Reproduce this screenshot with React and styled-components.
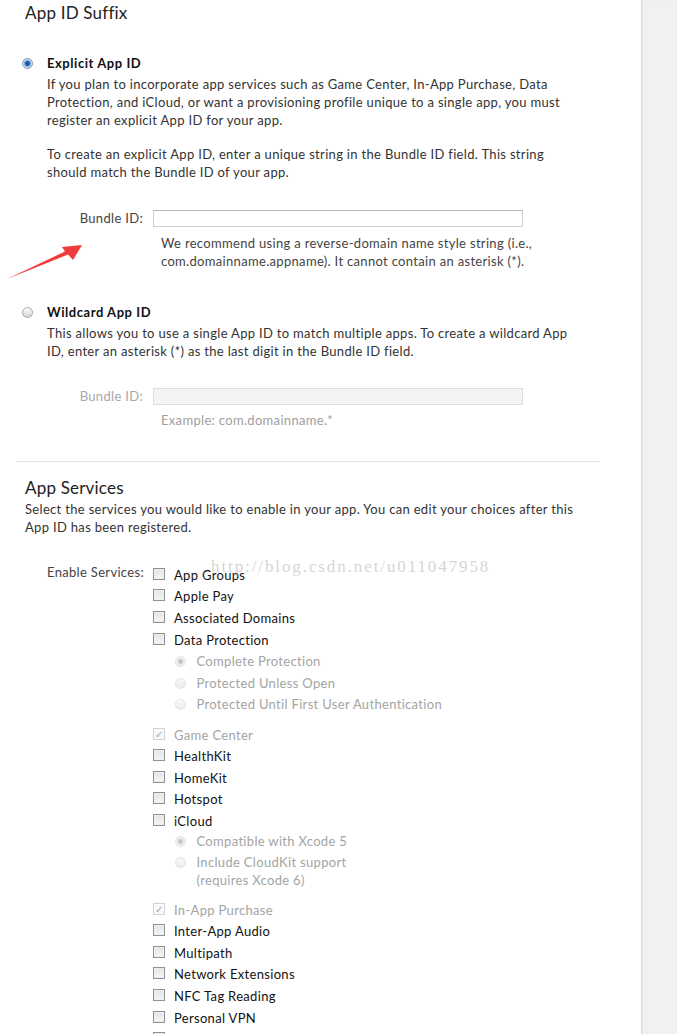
import React from "react"
import styled, { createGlobalStyle, css } from "styled-components"

const GlobalStyle = createGlobalStyle`
  html, body {
    margin: 0;
    padding: 0;
    background: #fff;
  }
  body {
    font-family: Lato, "Open Sans", sans-serif;
    font-size: 13px;
    letter-spacing: 0.32px;
    color: #333;
  }
`

const services = [
  { name: "App Groups" },
  { name: "Apple Pay" },
  { name: "Associated Domains" },
  {
    name: "Data Protection",
    options: [
      { label: "Complete Protection", checked: true },
      { label: "Protected Unless Open" },
      { label: "Protected Until First User Authentication" },
    ],
  },
  { name: "Game Center", disabled: true, checked: true },
  { name: "HealthKit" },
  { name: "HomeKit" },
  { name: "Hotspot" },
  {
    name: "iCloud",
    tight: true,
    options: [
      { label: "Compatible with Xcode 5", checked: true },
      { label: "Include CloudKit support", note: "(requires Xcode 6)" },
    ],
  },
  { name: "In-App Purchase", disabled: true, checked: true },
  { name: "Inter-App Audio" },
  { name: "Multipath" },
  { name: "Network Extensions" },
  { name: "NFC Tag Reading" },
  { name: "Personal VPN" },
  { name: "Push Notifications" },
]

const Arrow = () => (
  <ArrowSvg width="90" height="46" viewBox="0 0 90 46">
    <polygon
      points="7,41 65,13.5 62,9 82,7 73,22 68,16.5"
      fill="#f23b3b"
    />
  </ArrowSvg>
)

const App = () => {
  return (
    <Page>
      <GlobalStyle />
      <Main>
        <Title>App ID Suffix</Title>

        <Option $top={31}>
          <Radio $checked />
          <OptionBody>
            <OptionName>Explicit App ID</OptionName>
            <Text $top={3}>
              If you plan to incorporate app services such as Game Center, In-App Purchase, Data<br />
              Protection, and iCloud, or want a provisioning profile unique to a single app, you must<br />
              register an explicit App ID for your app.
            </Text>
            <Text $top={16}>
              To create an explicit App ID, enter a unique string in the Bundle ID field. This string<br />
              should match the Bundle ID of your app.
            </Text>
          </OptionBody>
        </Option>

        <FieldRow $top={29}>
          <FieldLabel>Bundle ID:</FieldLabel>
          <Input type="text" />
        </FieldRow>
        <Hint $top={7}>
          We recommend using a reverse-domain name style string (i.e.,<br />
          com.domainname.appname). It cannot contain an asterisk (*).
        </Hint>

        <Option $top={33}>
          <Radio />
          <OptionBody>
            <OptionName>Wildcard App ID</OptionName>
            <Text $top={3}>
              This allows you to use a single App ID to match multiple apps. To create a wildcard App<br />
              ID, enter an asterisk (*) as the last digit in the Bundle ID field.
            </Text>
          </OptionBody>
        </Option>

        <FieldRow $top={28}>
          <FieldLabel $disabled>Bundle ID:</FieldLabel>
          <Input type="text" disabled />
        </FieldRow>
        <Hint $top={6} $disabled>Example: com.domainname.*</Hint>

        <Rule />

        <Title $top={16}>App Services</Title>
        <Text $top={2} $indent={25}>
          Select the services you would like to enable in your app. You can edit your choices after this<br />
          App ID has been registered.
        </Text>

        <ServicesRow>
          <FieldLabel $lift>Enable Services:</FieldLabel>
          <ServiceList>
            {services.map((s) => (
              <li key={s.name}>
                <ServiceItem $disabled={s.disabled}>
                  <Checkbox $disabled={s.disabled}>{s.checked ? "✓" : null}</Checkbox>
                  {s.name}
                </ServiceItem>
                {s.options && (
                  <SubList $tight={s.tight}>
                    {s.options.map((o) => (
                      <SubItem key={o.label}>
                        <SmallRadio $checked={o.checked} />
                        <span>
                          {o.label}
                          {o.note && (<><br />{o.note}</>)}
                        </span>
                      </SubItem>
                    ))}
                  </SubList>
                )}
              </li>
            ))}
          </ServiceList>
        </ServicesRow>
      </Main>
      <Sidebar />
      <Arrow />
      <Watermark>http://blog.csdn.net/u011047958</Watermark>
    </Page>
  )
}

const Page = styled.div`
  position: relative;
  display: flex;
  height: 1034px;
  overflow: hidden;
`

const Main = styled.div`
  width: 641px;
  flex-shrink: 0;
`

const Sidebar = styled.div`
  flex: 1;
  background: #f1f1f1;
  border-left: 1px solid #dcdcdc;
  box-shadow: inset 1px 0 1px #e6e6e6;
`

const Title = styled.h2`
  margin: ${(p) => p.$top || 3}px 0 0 25px;
  font-size: 17px;
  line-height: 20px;
  font-weight: normal;
  letter-spacing: 0.2px;
  color: #222;
`

const Option = styled.div`
  display: grid;
  grid-template-columns: 24px 1fr;
  margin: ${(p) => p.$top}px 0 0 22px;
`

const OptionBody = styled.div`
  margin-left: 1px;
`

const OptionName = styled.div`
  font-weight: bold;
  line-height: 18px;
  letter-spacing: 0.55px;
  color: #111;
`

const Text = styled.p`
  margin: ${(p) => p.$top}px 0 0 ${(p) => p.$indent || 0}px;
  line-height: 18px;
  color: #333;
  white-space: nowrap;
`

const radioBase = css`
  box-sizing: border-box;
  width: 11px;
  height: 11px;
  border-radius: 50%;
`

const Radio = styled.span`
  ${radioBase}
  margin-top: 4px;
  ${(p) =>
    p.$checked
      ? css`
          border: 1px solid #7d93ab;
          background: radial-gradient(circle, #1c5aa3 0 1.8px, #4f8fd3 2.6px, #a9cbec 3.6px, #e3eef9 4.5px);
        `
      : css`
          border: 1px solid #a4a4a4;
          background: linear-gradient(#fdfdfd, #d6d6d6);
        `}
`

const SmallRadio = styled.span`
  ${radioBase}
  flex-shrink: 0;
  margin: 4px 11px 0 -0.5px;
  border: 1px solid #e2e2e2;
  background: ${(p) =>
    p.$checked
      ? "radial-gradient(circle, #c4c4c4 0 1.8px, #e2e2e2 2.6px, #f3f3f3 4px)"
      : "linear-gradient(#fafafa, #ebebeb)"};
`

const FieldRow = styled.div`
  display: grid;
  grid-template-columns: 96px 370px;
  column-gap: 10px;
  align-items: center;
  margin: ${(p) => p.$top}px 0 0 47px;
`

const FieldLabel = styled.div`
  text-align: right;
  line-height: 17px;
  white-space: nowrap;
  color: ${(p) => (p.$disabled ? "#a8a8a8" : "#444")};
  ${(p) => p.$lift && css`margin-top: -1px; line-height: 18px;`}
`

const Input = styled.input`
  box-sizing: border-box;
  height: 17px;
  width: 100%;
  margin: 0;
  padding: 0 3px;
  border: 1px solid #cfcfcf;
  border-top-color: #b4b4b4;
  background: #fff;
  outline: none;
  &:disabled {
    background: #f4f4f4;
    border-color: #dedede;
  }
`

const Hint = styled.p`
  margin: ${(p) => p.$top}px 0 0 161px;
  line-height: 18px;
  color: ${(p) => (p.$disabled ? "#a0a0a0" : "#444")};
  white-space: nowrap;
`

const Rule = styled.hr`
  margin: 32px 0 0 16px;
  width: 584px;
  border: none;
  border-top: 1px solid #e4e4e4;
`

const ServicesRow = styled.div`
  display: grid;
  grid-template-columns: 96px 1fr;
  column-gap: 10px;
  align-items: start;
  margin: 28px 0 0 47px;
`

const ServiceList = styled.ul`
  list-style: none;
  margin: 0;
  padding: 0;
`

const ServiceItem = styled.div`
  display: flex;
  align-items: flex-start;
  padding: 1.8px 0;
  line-height: 18px;
  color: ${(p) => (p.$disabled ? "#a4a4a4" : "#111")};
`

const Checkbox = styled.span`
  box-sizing: border-box;
  flex-shrink: 0;
  width: 12px;
  height: 12px;
  margin: 2px 9px 0 0;
  display: flex;
  align-items: center;
  justify-content: center;
  font-size: 10px;
  line-height: 1;
  letter-spacing: 0;
  color: #a8a8a8;
  border: 1px solid ${(p) => (p.$disabled ? "#d2d2d2" : "#919191")};
  background: ${(p) => (p.$disabled ? "#f7f7f7" : "linear-gradient(#e4e4e4, #f6f6f6)")};
  box-shadow: inset 0 0 0 1px ${(p) => (p.$disabled ? "#fbfbfb" : "#efefef")};
`

const SubList = styled.ul`
  list-style: none;
  margin: ${(p) => (p.$tight ? "-2px 0 8px" : "0 0 9px")};
  padding: 0 0 0 22px;
`

const SubItem = styled.li`
  display: flex;
  align-items: flex-start;
  padding: 1.75px 0;
  line-height: 18px;
  color: #a4a4a4;
`

const ArrowSvg = styled.svg`
  position: absolute;
  left: 0;
  top: 238px;
`

const Watermark = styled.div`
  position: absolute;
  left: 211px;
  top: 557px;
  font-family: "Liberation Serif", serif;
  font-size: 17px;
  letter-spacing: 1.9px;
  line-height: 20px;
  color: rgba(170, 170, 170, 0.5);
  white-space: nowrap;
  pointer-events: none;
`

export default App
